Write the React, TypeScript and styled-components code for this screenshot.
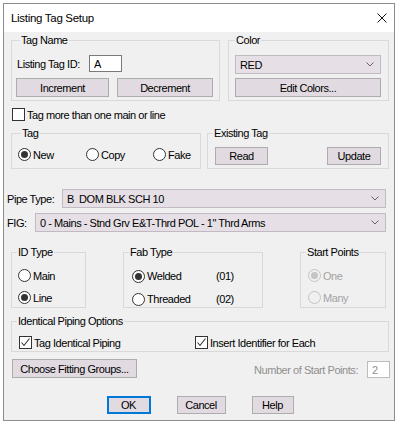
import React from 'react';
import styled, { createGlobalStyle, css } from 'styled-components';

const FONT = `"Liberation Sans", Arial, sans-serif`;
const SPACING = '-0.45px';

const GlobalStyle = createGlobalStyle`
  html, body { margin: 0; padding: 0; background: #ffffff; }
  body { font-family: ${FONT}; font-size: 11px; letter-spacing: ${SPACING}; color: #000; }
  *, *::before, *::after { box-sizing: border-box; }
`;

const Dialog = styled.div`
  margin: 3px 0 0 3px;
  width: 392px;
  height: 418px;
  border: 1px solid #8c8c8c;
  background: #f0f0f0;
  display: flex;
  flex-direction: column;
`;

const TitleBar = styled.div`
  height: 28px;
  flex: none;
  background: #ffffff;
  display: flex;
  align-items: center;
  justify-content: space-between;
  padding: 0 7px 0 7px;
`;

const Title = styled.span`
  font-size: 11.5px;
  letter-spacing: -0.3px;
  line-height: 14px;
`;

const CloseButton = styled.button`
  border: 0;
  background: transparent;
  padding: 0;
  width: 10px;
  height: 10px;
  display: flex;
  align-items: center;
  justify-content: center;
`;

const Body = styled.div`
  flex: 1;
  display: flex;
  flex-direction: column;
  padding: 1px 5px 0 7px;
`;

const Row = styled.div<{ $mt?: number; $gap?: number }>`
  display: flex;
  margin-top: ${p => p.$mt ?? 0}px;
  gap: ${p => p.$gap ?? 0}px;
`;

const Group = styled.fieldset<{ $w?: number; $h: number }>`
  margin: 0;
  padding: 0;
  min-width: 0;
  border: 1px solid #d9d9d9;
  width: ${p => (p.$w ? `${p.$w}px` : '100%')};
  height: ${p => p.$h}px;
  flex: none;
`;

const Legend = styled.legend<{ $offset: number }>`
  margin-left: ${p => p.$offset}px;
  padding: 0 1px;
  line-height: 14px;
  height: 14px;
`;

const GroupBody = styled.div<{ $pad: string; $gap?: number; $dir?: 'row' | 'column'; $spread?: boolean }>`
  display: flex;
  flex-direction: ${p => p.$dir ?? 'column'};
  justify-content: ${p => (p.$spread ? 'space-between' : 'flex-start')};
  padding: ${p => p.$pad};
  gap: ${p => p.$gap ?? 0}px;
`;

const IdRow = styled.div`
  display: grid;
  grid-template-columns: 72px 33px;
  align-items: center;
  padding-left: 1px;
`;

const FieldLabel = styled.span<{ $muted?: boolean }>`
  line-height: 14px;
  white-space: nowrap;
  color: ${p => (p.$muted ? '#8f8f8f' : '#000')};
`;

const TextInput = styled.input<{ $w: number; $disabled?: boolean }>`
  width: ${p => p.$w}px;
  height: 17px;
  margin: 0;
  padding: 0 0 0 4px;
  border: 1px solid ${p => (p.$disabled ? '#bdbdbd' : '#7a7a7a')};
  background: #ffffff;
  font-family: ${FONT};
  font-size: 11px;
  letter-spacing: ${SPACING};
  color: ${p => (p.$disabled ? '#8f8f8f' : '#000')};
  outline: none;
`;

const Button = styled.button<{ $w: number; $h?: number; $default?: boolean; $ml?: number }>`
  width: ${p => p.$w}px;
  height: ${p => p.$h ?? 19}px;
  flex: none;
  margin: 0 0 0 ${p => p.$ml ?? 0}px;
  padding: 0;
  background: #e1dbe1;
  border: 1px solid #adadad;
  font-family: ${FONT};
  font-size: 11px;
  letter-spacing: ${SPACING};
  white-space: nowrap;
  color: #000;
  ${p =>
    p.$default &&
    css`
      border-color: #0078d7;
      box-shadow: inset 0 0 0 1px #0078d7;
    `}
`;

const ButtonPair = styled.div`
  display: flex;
  gap: 8px;
`;

const SelectBox = styled.div<{ $w?: number }>`
  width: ${p => (p.$w ? `${p.$w}px` : 'auto')};
  height: 19px;
  background: #e6e0e6;
  border: 1px solid #c2bac2;
  display: flex;
  align-items: center;
  justify-content: space-between;
  padding: 0 6px 0 4px;
  white-space: pre;
  line-height: 14px;
`;

const LabeledSelect = styled.div<{ $label: number; $mt?: number }>`
  display: grid;
  grid-template-columns: ${p => p.$label}px 1fr;
  align-items: center;
  margin: ${p => p.$mt ?? 0}px 3px 0 -4px;
`;

const OptionLabel = styled.label<{ $disabled?: boolean }>`
  display: flex;
  align-items: center;
  gap: 2px;
  height: 13px;
  line-height: 14px;
  white-space: nowrap;
  color: ${p => (p.$disabled ? '#a3a3a3' : '#000')};
`;

const RadioCircle = styled.span<{ $checked?: boolean; $disabled?: boolean }>`
  width: 13px;
  height: 13px;
  flex: none;
  border-radius: 50%;
  border: 1px solid ${p => (p.$disabled ? '#c4c4c4' : '#333333')};
  background: ${p => (p.$disabled ? '#f0f0f0' : '#ffffff')};
  display: flex;
  align-items: center;
  justify-content: center;
  &::after {
    content: '';
    width: 7px;
    height: 7px;
    border-radius: 50%;
    background: ${p => (p.$disabled ? '#c4c4c4' : '#333333')};
    display: ${p => (p.$checked ? 'block' : 'none')};
  }
`;

const CheckBox = styled.span`
  width: 13px;
  height: 13px;
  flex: none;
  border: 1px solid #333333;
  background: #ffffff;
  display: flex;
  align-items: center;
  justify-content: center;
`;

const CheckRow = styled.div<{ $mt?: number; $ml?: number }>`
  margin-top: ${p => p.$mt ?? 0}px;
  margin-left: ${p => p.$ml ?? 0}px;
  display: flex;
`;

const OptionGrid = styled.div<{ $cols: string }>`
  display: grid;
  grid-template-columns: ${p => p.$cols};
  align-items: center;
`;

const BottomRow = styled.div<{ $mt: number }>`
  display: flex;
  align-items: flex-end;
  margin-top: ${p => p.$mt}px;
`;

const StartCount = styled.div`
  margin-left: auto;
  margin-right: -1px;
  display: flex;
  align-items: center;
  gap: 9px;
`;

const DialogButtons = styled.div<{ $mt: number }>`
  display: flex;
  justify-content: center;
  gap: 26px;
  margin-top: ${p => p.$mt}px;
`;

const Chevron = () => (
  <svg width="8" height="5" viewBox="0 0 8 5">
    <polyline points="0.5,0.5 4,4 7.5,0.5" fill="none" stroke="#666" strokeWidth="1" />
  </svg>
);

const CheckMark = () => (
  <svg width="11" height="11" viewBox="0 0 11 11">
    <polyline points="1.5,5.5 4,8.5 9.5,1.5" fill="none" stroke="#333" strokeWidth="1.1" />
  </svg>
);

const Radio = ({ label, checked, disabled }: { label: string; checked?: boolean; disabled?: boolean }) => (
  <OptionLabel $disabled={disabled}>
    <RadioCircle $checked={checked} $disabled={disabled} />
    <span>{label}</span>
  </OptionLabel>
);

const Check = ({ label, checked }: { label: string; checked?: boolean }) => (
  <OptionLabel>
    <CheckBox>{checked && <CheckMark />}</CheckBox>
    <span>{label}</span>
  </OptionLabel>
);

const Select = ({ value, w }: { value: string; w?: number }) => (
  <SelectBox $w={w} role="combobox">
    <span>{value}</span>
    <Chevron />
  </SelectBox>
);

export default function App() {
  return (
    <>
      <GlobalStyle />
      <Dialog>
        <TitleBar>
          <Title>Listing Tag Setup</Title>
          <CloseButton aria-label="Close">
            <svg width="10" height="10" viewBox="0 0 10 10">
              <path d="M0.5 0.5 L9.5 9.5 M9.5 0.5 L0.5 9.5" stroke="#111" strokeWidth="1" fill="none" />
            </svg>
          </CloseButton>
        </TitleBar>
        <Body>
          <Row $gap={8}>
            <Group $w={209} $h={68}>
              <Legend $offset={8}>Tag Name</Legend>
              <GroupBody $pad="8px 0 3px 4px" $gap={6}>
                <IdRow>
                  <FieldLabel>Listing Tag ID:</FieldLabel>
                  <TextInput $w={33} readOnly value="A" />
                </IdRow>
                <ButtonPair>
                  <Button $w={93}>Increment</Button>
                  <Button $w={96}>Decrement</Button>
                </ButtonPair>
              </GroupBody>
            </Group>
            <Group $w={161} $h={68}>
              <Legend $offset={6}>Color</Legend>
              <GroupBody $pad="8px 0 3px 6px" $gap={4}>
                <Select value="RED" w={146} />
                <Button $w={146}>Edit Colors...</Button>
              </GroupBody>
            </Group>
          </Row>

          <CheckRow $mt={7} $ml={1}>
            <Check label="Tag more than one main or line" />
          </CheckRow>

          <Row $mt={5} $gap={6}>
            <Group $w={190} $h={43}>
              <Legend $offset={9}>Tag</Legend>
              <GroupBody $pad="8px 0 7px 6px">
                <OptionGrid $cols="68px 67px auto">
                  <Radio label="New" checked />
                  <Radio label="Copy" />
                  <Radio label="Fake" />
                </OptionGrid>
              </GroupBody>
            </Group>
            <Group $w={182} $h={43}>
              <Legend $offset={5}>Existing Tag</Legend>
              <GroupBody $pad="7px 7px 3px 7px" $dir="row" $spread>
                <Button $w={53} $h={18}>Read</Button>
                <Button $w={54} $h={18}>Update</Button>
              </GroupBody>
            </Group>
          </Row>

          <LabeledSelect $label={55} $mt={20}>
            <FieldLabel>Pipe Type:</FieldLabel>
            <Select value="B  DOM BLK SCH 10" />
          </LabeledSelect>
          <LabeledSelect $label={28} $mt={5}>
            <FieldLabel>FIG:</FieldLabel>
            <Select value={'0 - Mains - Stnd Grv E&T-Thrd POL - 1" Thrd Arms'} />
          </LabeledSelect>

          <Row $mt={13} $gap={37}>
            <Group $w={75} $h={63}>
              <Legend $offset={5}>ID Type</Legend>
              <GroupBody $pad="10px 0 3px 6px" $gap={9}>
                <Radio label="Main" />
                <Radio label="Line" checked />
              </GroupBody>
            </Group>
            <Group $w={140} $h={63}>
              <Legend $offset={5}>Fab Type</Legend>
              <GroupBody $pad="10px 0 3px 8px" $gap={9}>
                <OptionGrid $cols="84px auto">
                  <Radio label="Welded" checked />
                  <FieldLabel>(01)</FieldLabel>
                </OptionGrid>
                <OptionGrid $cols="84px auto">
                  <Radio label="Threaded" />
                  <FieldLabel>(02)</FieldLabel>
                </OptionGrid>
              </GroupBody>
            </Group>
            <Group $w={86} $h={63}>
              <Legend $offset={5}>Start Points</Legend>
              <GroupBody $pad="10px 0 3px 7px" $gap={9}>
                <Radio label="One" checked disabled />
                <Radio label="Many" disabled />
              </GroupBody>
            </Group>
          </Row>

          <Row $mt={6}>
            <Group $h={38}>
              <Legend $offset={5}>Identical Piping Options</Legend>
              <GroupBody $pad="8px 0 2px 7px">
                <OptionGrid $cols="176px auto">
                  <Check label="Tag Identical Piping" checked />
                  <Check label="Insert Identifier for Each" checked />
                </OptionGrid>
              </GroupBody>
            </Group>
          </Row>

          <BottomRow $mt={7}>
            <Button $w={125} $ml={1}>Choose Fitting Groups...</Button>
            <StartCount>
              <FieldLabel $muted>Number of Start Points:</FieldLabel>
              <TextInput $w={23} $disabled readOnly value="2" />
            </StartCount>
          </BottomRow>

          <DialogButtons $mt={18}>
            <Button $w={44} $h={18} $default>OK</Button>
            <Button $w={49} $h={18}>Cancel</Button>
            <Button $w={42} $h={18}>Help</Button>
          </DialogButtons>
        </Body>
      </Dialog>
    </>
  );
}
